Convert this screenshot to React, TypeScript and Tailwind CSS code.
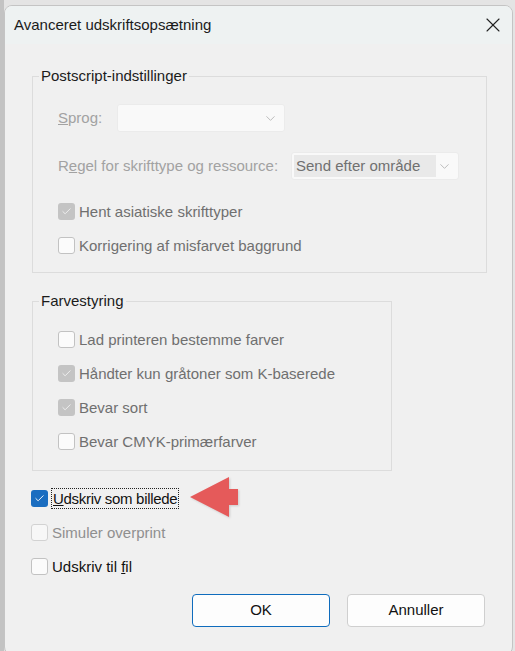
import { X, ChevronDown, Check } from 'lucide-react';

const FONT = { fontFamily: '"Liberation Sans", Arial, sans-serif' };

function Box({ state }: { state: 'off' | 'on-disabled' | 'off-disabled' | 'on' }) {
  if (state === 'on') {
    return (
      <span className="flex h-[17px] w-[17px] shrink-0 items-center justify-center rounded-[3px] bg-[#1a6dc0]">
        <Check className="h-[11px] w-[11px] text-white" strokeWidth={2} />
      </span>
    );
  }
  if (state === 'on-disabled') {
    return (
      <span className="flex h-[17px] w-[17px] shrink-0 items-center justify-center rounded-[3px] bg-[#c4c4c4]">
        <Check className="h-[11px] w-[11px] text-white" strokeWidth={1.5} />
      </span>
    );
  }
  if (state === 'off-disabled') {
    return <span className="h-[17px] w-[17px] shrink-0 rounded-[3px] border border-[#d2d2d2] bg-[#f7f7f7]" />;
  }
  return <span className="h-[17px] w-[17px] shrink-0 rounded-[3px] border border-[#c2c2c2] bg-[#fbfbfb]" />;
}

function Row({ state, children, color = 'text-[#6f6f6f]' }: { state: 'off' | 'on-disabled' | 'off-disabled' | 'on'; children: React.ReactNode; color?: string }) {
  return (
    <div className="flex h-[34px] items-center gap-[4px]">
      <Box state={state} />
      <span className={`text-[15px] leading-none ${color}`}>{children}</span>
    </div>
  );
}

export default function App() {
  return (
    <div className="h-[651px] w-[515px] overflow-hidden bg-[#e4e4e4]" style={FONT}>
      <div className="flex h-full">
        <div className="w-[4px] shrink-0 bg-[#c3c3c3]" />
        <div className="mt-[5px] flex h-[650px] w-[509px] flex-col overflow-hidden rounded-[8px] border border-[#c4c4c4] bg-[#f0f0f0]">
          <div className="flex h-[38px] shrink-0 items-center justify-between bg-[#eef2f2] pl-[9px] pr-[7px]">
            <span className="text-[15px] text-[#1b1b1b]">Avanceret udskriftsopsætning</span>
            <X className="h-[24px] w-[24px] text-[#222]" strokeWidth={1.1} />
          </div>

          <div className="flex flex-col pl-[27px] pt-[22px]">
            <fieldset className="h-[207px] w-[455px] border border-[#dcdcdc] px-[25px]">
              <legend className="-ml-[19px] px-[2px] text-[15px] leading-[20px] text-[#1b1b1b]">Postscript-indstillinger</legend>
              <div className="mt-[18px] flex items-center">
                <span className="w-[59px] text-[15px] text-[#a2a2a2]"><span className="underline">S</span>prog:</span>
                <div className="flex h-[28px] w-[168px] items-center justify-end rounded-[3px] border border-[#ebebeb] bg-[#f9f9f9] pr-[6px]">
                  <ChevronDown className="h-[15px] w-[15px] text-[#a8a8a8]" strokeWidth={1.2} />
                </div>
              </div>
              <div className="mt-[20px] flex items-center">
                <span className="w-[233px] text-[15px] text-[#a2a2a2]">R<span className="underline">e</span>gel for skrifttype og ressource:</span>
                <div className="flex h-[28px] w-[168px] items-center justify-between rounded-[3px] border border-[#ebebeb] bg-[#f9f9f9] pl-[2px] pr-[6px]">
                  <span className="flex h-[22px] w-[142px] items-center bg-[#e9e9e9] pl-[2px] text-[15px] text-[#707070]">Send efter område</span>
                  <ChevronDown className="h-[15px] w-[15px] text-[#a8a8a8]" strokeWidth={1.2} />
                </div>
              </div>
              <div className="mt-[14px]">
                <Row state="on-disabled">Hent asiatiske skrifttyper</Row>
                <Row state="off">Korrigering af misfarvet baggrund</Row>
              </div>
            </fieldset>

            <fieldset className="mt-[18px] h-[180px] w-[360px] border border-[#dcdcdc] px-[25px]">
              <legend className="-ml-[19px] px-[2px] text-[15px] leading-[20px] text-[#1b1b1b]">Farvestyring</legend>
              <div className="mt-[11px]">
                <Row state="off">Lad printeren bestemme farver</Row>
                <Row state="on-disabled">Håndter kun gråtoner som K-baserede</Row>
                <Row state="on-disabled">Bevar sort</Row>
                <Row state="off">Bevar CMYK-primærfarver</Row>
              </div>
            </fieldset>

            <div className="-ml-[1px] mt-[10px]">
              <div className="flex h-[34px] items-center gap-[3px]">
                <Box state="on" />
                <span className="border border-dotted border-[#222] px-[1px] py-[2px] text-[15px] leading-none tracking-[-0.3px] text-[#111]">
                  <span className="underline">U</span>dskriv som billede
                </span>
                <svg className="ml-[6px]" width="52" height="44" viewBox="0 0 52 44" style={{ filter: 'blur(0.6px) drop-shadow(1px 1px 1px rgba(0,0,0,0.15))' }}>
                  <polygon points="2,21 41,1 41,13 50,13 50,29 41,29 41,41" fill="#e55a5a" />
                </svg>
              </div>
              <Row state="off-disabled" color="text-[#8f8f8f]">Simuler overprint</Row>
              <Row state="off" color="text-[#111]">Udskriv til <span className="underline">f</span>il</Row>
            </div>

            <div className="mt-[11px] flex gap-[17px] pl-[160px]">
              <button className="h-[33px] w-[138px] rounded-[4px] border border-[#0f6cbd] bg-[#fdfdfd] text-[15px] text-[#111]">OK</button>
              <button className="h-[33px] w-[138px] rounded-[4px] border border-[#cfcfcf] bg-[#fdfdfd] text-[15px] text-[#111]">Annuller</button>
            </div>
          </div>
        </div>
      </div>
    </div>
  );
}
